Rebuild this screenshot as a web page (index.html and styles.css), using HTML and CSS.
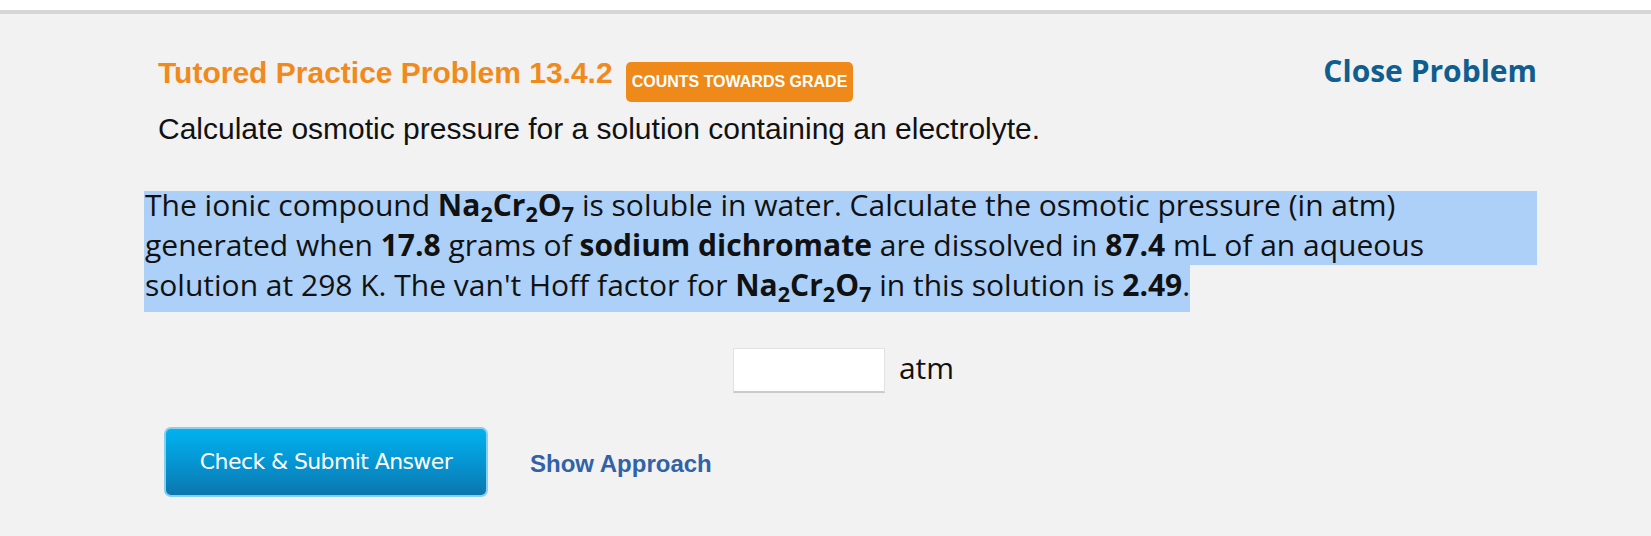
FILE: index.html
```html
<!DOCTYPE html>
<html lang="en">
<head>
<meta charset="utf-8">
<title>Tutored Practice Problem 13.4.2</title>
<link rel="stylesheet" href="styles.css">
</head>
<body>
<div class="topbar"></div>
<main class="problem">
  <header class="problem-header">
    <div class="title-group">
      <h1 class="problem-title">Tutored Practice Problem 13.4.2</h1>
      <span class="grade-badge">COUNTS TOWARDS GRADE</span>
    </div>
    <a class="close-link" href="#">Close Problem</a>
  </header>
  <p class="problem-subtitle">Calculate osmotic pressure for a solution containing an electrolyte.</p>
  <div class="prompt">
    <span class="prompt-line first">The ionic compound <b>Na<sub>2</sub>Cr<sub>2</sub>O<sub>7</sub></b> is soluble in water. Calculate the osmotic pressure (in atm)</span>
    <span class="prompt-line">generated when <b>17.8</b> grams of <b>sodium dichromate</b> are dissolved in <b>87.4</b> mL of an aqueous</span>
    <span class="prompt-line last">solution at 298 K. The van't Hoff factor for <b>Na<sub>2</sub>Cr<sub>2</sub>O<sub>7</sub></b> in this solution is <b>2.49</b>.</span>
  </div>
  <div class="answer-row">
    <input class="answer-input" type="text" aria-label="answer">
    <span class="unit">atm</span>
  </div>
  <div class="actions">
    <button class="submit-btn" type="button">Check &amp; Submit Answer</button>
    <a class="approach-link" href="#">Show Approach</a>
  </div>
</main>
</body>
</html>
```
FILE: styles.css
```css
html, body {
  margin: 0;
  padding: 0;
}
body {
  background: #f2f2f2;
  min-height: 536px;
}
.topbar {
  height: 10px;
  background: #ffffff;
  border-bottom: 4px solid #d6d6d6;
}
.problem {
  padding: 41px 114px 0 144px;
}
.problem-header {
  display: flex;
  justify-content: space-between;
  align-items: flex-start;
  padding-left: 14px;
}
.title-group {
  display: flex;
  align-items: flex-start;
  gap: 13px;
}
.problem-title {
  margin: 0;
  font-family: "Liberation Sans", Arial, sans-serif;
  font-weight: bold;
  font-size: 30px;
  line-height: 36px;
  color: #f08a1d;
}
.grade-badge {
  margin-top: 7px;
  height: 40px;
  line-height: 40px;
  padding: 0 6px;
  background: #ef8a1a;
  border-radius: 5px;
  color: #ffffff;
  font-family: "Liberation Sans", Arial, sans-serif;
  font-weight: bold;
  font-size: 16px;
  box-sizing: border-box;
}
.close-link {
  font-family: "Open Sans", sans-serif;
  font-weight: bold;
  font-size: 30px;
  line-height: 31px;
  color: #0f5e8f;
  text-decoration: none;
}
.problem-subtitle {
  margin: 9px 0 0;
  padding-left: 14px;
  font-family: "Liberation Sans", Arial, sans-serif;
  font-size: 30px;
  line-height: 36px;
  color: #111111;
}
.prompt {
  margin-top: 38px;
  font-family: "Open Sans", sans-serif;
  font-size: 30px;
  line-height: 40px;
  color: #111111;
}
.prompt-line {
  display: block;
  white-space: nowrap;
  padding-left: 1px;
  background: #acd0f7;
}
.prompt-line.first {
  background: linear-gradient(to bottom, transparent 6.5px, #acd0f7 6.5px);
}
.prompt-line.last {
  width: fit-content;
  padding-bottom: 6.5px;
}
.prompt b {
  font-weight: bold;
}
.prompt sub {
  font-size: 0.72em;
  line-height: 0;
  vertical-align: -0.28em;
}
.answer-row {
  display: flex;
  justify-content: center;
  align-items: center;
  gap: 14px;
  margin-top: 36px;
  padding-left: 6px;
}
.answer-input {
  width: 152px;
  height: 45px;
  box-sizing: border-box;
  margin: 0;
  padding: 0 6px;
  background: #ffffff;
  border: 1px solid #e2e2e2;
  border-bottom: 2px solid #cacaca;
  border-radius: 0;
  font-family: "Open Sans", sans-serif;
  font-size: 20px;
}
.unit {
  font-family: "Open Sans", sans-serif;
  font-size: 30px;
  line-height: 36px;
  margin-bottom: 4px;
  color: #111111;
}
.actions {
  display: flex;
  align-items: center;
  gap: 42px;
  margin-top: 34px;
  padding-left: 20px;
}
.submit-btn {
  width: 324px;
  height: 70px;
  box-sizing: border-box;
  margin: 0;
  padding: 0;
  border: 2px solid #86cff0;
  border-radius: 7px;
  background: linear-gradient(to bottom, #00b2ee 0%, #0596d3 50%, #0b76ad 100%);
  color: #ffffff;
  font-family: "DejaVu Sans", Verdana, sans-serif;
  font-size: 22px;
  letter-spacing: -0.6px;
  cursor: pointer;
}
.approach-link {
  margin-top: 4px;
  font-family: "Liberation Sans", Arial, sans-serif;
  font-weight: bold;
  font-size: 24px;
  line-height: 28px;
  color: #3162a8;
  text-decoration: none;
}
```
